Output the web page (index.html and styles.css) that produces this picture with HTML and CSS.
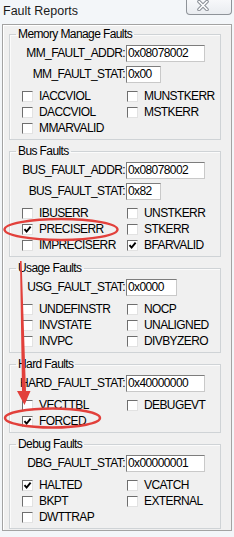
FILE: index.html
```html
<!DOCTYPE html>
<html>
<head>
<meta charset="utf-8">
<link rel="stylesheet" href="styles.css">
</head>
<body>
<div class="window">
  <div class="titlebar">
    <span class="title">Fault Reports</span>
    <div class="close">
      <svg width="12" height="11" viewBox="0 0 12 11">
        <path d="M2 1.5 L10 9.5 M10 1.5 L2 9.5" stroke="#8a8f96" stroke-width="3.6" stroke-linecap="round"/>
        <path d="M2 1.5 L10 9.5 M10 1.5 L2 9.5" stroke="#ffffff" stroke-width="1.6" stroke-linecap="round"/>
      </svg>
    </div>
  </div>
  <div class="panel">
    <fieldset class="group">
      <legend>Memory Manage Faults</legend>
      <div class="fields">
        <label>MM_FAULT_ADDR:</label><span class="input w-long">0x08078002</span>
        <label>MM_FAULT_STAT:</label><span class="input w-short">0x00</span>
      </div>
      <div class="checks">
        <span class="check"><span class="box"></span>IACCVIOL</span>
        <span class="check"><span class="box"></span>MUNSTKERR</span>
        <span class="check"><span class="box"></span>DACCVIOL</span>
        <span class="check"><span class="box"></span>MSTKERR</span>
        <span class="check"><span class="box"></span>MMARVALID</span>
      </div>
    </fieldset>
    <fieldset class="group">
      <legend>Bus Faults</legend>
      <div class="fields">
        <label>BUS_FAULT_ADDR:</label><span class="input w-long">0x08078002</span>
        <label>BUS_FAULT_STAT:</label><span class="input w-short">0x82</span>
      </div>
      <div class="checks">
        <span class="check"><span class="box"></span>IBUSERR</span>
        <span class="check"><span class="box"></span>UNSTKERR</span>
        <span class="check"><span class="box checked"><svg viewBox="0 0 9 9"><path d="M1.5 4.2 L3.6 6.6 L7.6 1.6"/></svg></span>PRECISERR</span>
        <span class="check"><span class="box"></span>STKERR</span>
        <span class="check"><span class="box"></span>IMPRECISERR</span>
        <span class="check"><span class="box checked"><svg viewBox="0 0 9 9"><path d="M1.5 4.2 L3.6 6.6 L7.6 1.6"/></svg></span>BFARVALID</span>
      </div>
    </fieldset>
    <fieldset class="group">
      <legend>Usage Faults</legend>
      <div class="fields">
        <label>USG_FAULT_STAT:</label><span class="input w-mid">0x0000</span>
      </div>
      <div class="checks">
        <span class="check"><span class="box"></span>UNDEFINSTR</span>
        <span class="check"><span class="box"></span>NOCP</span>
        <span class="check"><span class="box"></span>INVSTATE</span>
        <span class="check"><span class="box"></span>UNALIGNED</span>
        <span class="check"><span class="box"></span>INVPC</span>
        <span class="check"><span class="box"></span>DIVBYZERO</span>
      </div>
    </fieldset>
    <fieldset class="group">
      <legend>Hard Faults</legend>
      <div class="fields">
        <label>HARD_FAULT_STAT:</label><span class="input w-long">0x40000000</span>
      </div>
      <div class="checks">
        <span class="check"><span class="box"></span>VECTTBL</span>
        <span class="check"><span class="box"></span>DEBUGEVT</span>
        <span class="check"><span class="box checked"><svg viewBox="0 0 9 9"><path d="M1.5 4.2 L3.6 6.6 L7.6 1.6"/></svg></span>FORCED</span>
      </div>
    </fieldset>
    <fieldset class="group">
      <legend>Debug Faults</legend>
      <div class="fields">
        <label>DBG_FAULT_STAT:</label><span class="input w-long">0x00000001</span>
      </div>
      <div class="checks">
        <span class="check"><span class="box checked"><svg viewBox="0 0 9 9"><path d="M1.5 4.2 L3.6 6.6 L7.6 1.6"/></svg></span>HALTED</span>
        <span class="check"><span class="box"></span>VCATCH</span>
        <span class="check"><span class="box"></span>BKPT</span>
        <span class="check"><span class="box"></span>EXTERNAL</span>
        <span class="check"><span class="box"></span>DWTTRAP</span>
      </div>
    </fieldset>
  </div>
  <svg class="annot" width="234" height="537" viewBox="0 0 234 537">
    <ellipse cx="61" cy="229.5" rx="56.5" ry="10.5" fill="none" stroke="#e2403b" stroke-width="2.4"/>
    <ellipse cx="52.5" cy="418" rx="47.5" ry="9.5" fill="none" stroke="#e2403b" stroke-width="2.4"/>
    <polygon points="20,261 21.6,261 26,391 30.5,391 24.5,405 17,391 22,391" fill="#e2403b"/>
  </svg>
</div>
</body>
</html>
```
FILE: styles.css
```css
html, body {
  margin: 0;
  padding: 0;
}
body {
  width: 234px;
  height: 537px;
  background: #f3f6f9;
  overflow: hidden;
  font-family: "Liberation Sans", Arial, sans-serif;
  font-size: 12px;
  letter-spacing: -0.6px;
  color: #000;
}
.window {
  position: relative;
  width: 234px;
  height: 537px;
}
.titlebar {
  height: 24px;
  display: flex;
  justify-content: space-between;
  align-items: flex-start;
}
.title {
  font-size: 12.5px;
  letter-spacing: 0;
  line-height: 14px;
  margin: 4px 0 0 3px;
  color: #1a1a1a;
}
.close {
  width: 46px;
  height: 15px;
  margin-right: 2px;
  box-sizing: border-box;
  border: 1px solid #8e9399;
  border-top: none;
  border-radius: 0 0 4px 4px;
  background: linear-gradient(#f7f8fa, #e9ecf0);
  display: flex;
  justify-content: flex-start;
  padding-left: 10px;
}
.close svg {
  display: block;
}
.panel {
  box-sizing: border-box;
  width: 230px;
  height: 507px;
  margin-left: 2px;
  background: #f0f0f0;
  border: 1px solid #a3a3a3;
  box-shadow: inset 1px 1px 0 #ffffff;
  padding: 3px 10px 0 6px;
  display: flex;
  flex-direction: column;
  gap: 5px;
}
.group {
  margin: 0;
  padding: 0 0 3px 0;
  border: 1px solid #cfd3d6;
  box-shadow: inset 1px 1px 0 #fbfbfb;
  min-width: 0;
}
.group legend {
  margin-left: 6px;
  padding: 0 2px;
  line-height: 12px;
}
.fields {
  display: grid;
  grid-template-columns: 115px auto;
  column-gap: 1px;
  row-gap: 4px;
  margin-top: 5px;
  justify-items: start;
}
.fields label {
  justify-self: end;
  line-height: 17px;
  white-space: nowrap;
}
.input {
  box-sizing: border-box;
  height: 17px;
  background: #ffffff;
  border: 1px solid;
  border-color: #7d7d7d #c9c9c9 #c9c9c9 #7d7d7d;
  line-height: 15px;
  padding-left: 1px;
  white-space: nowrap;
}
.w-long { width: 79px; }
.w-short { width: 35px; }
.w-mid { width: 51px; }
.checks {
  display: grid;
  grid-template-columns: 105px 1fr;
  grid-auto-rows: 16px;
  padding-left: 12px;
  margin-top: 5px;
}
.check {
  display: flex;
  align-items: center;
  white-space: nowrap;
  line-height: 16px;
}
.box {
  box-sizing: border-box;
  width: 11px;
  height: 11px;
  margin-right: 6px;
  background: #ffffff;
  border: 1px solid;
  border-color: #6e6e6e #e2e2e2 #e2e2e2 #6e6e6e;
  display: flex;
  align-items: center;
  justify-content: center;
}
.box svg {
  width: 9px;
  height: 9px;
  display: block;
}
.box svg path {
  fill: none;
  stroke: #000;
  stroke-width: 1.9;
}
.annot {
  position: absolute;
  left: 0;
  top: 0;
  pointer-events: none;
}
```
